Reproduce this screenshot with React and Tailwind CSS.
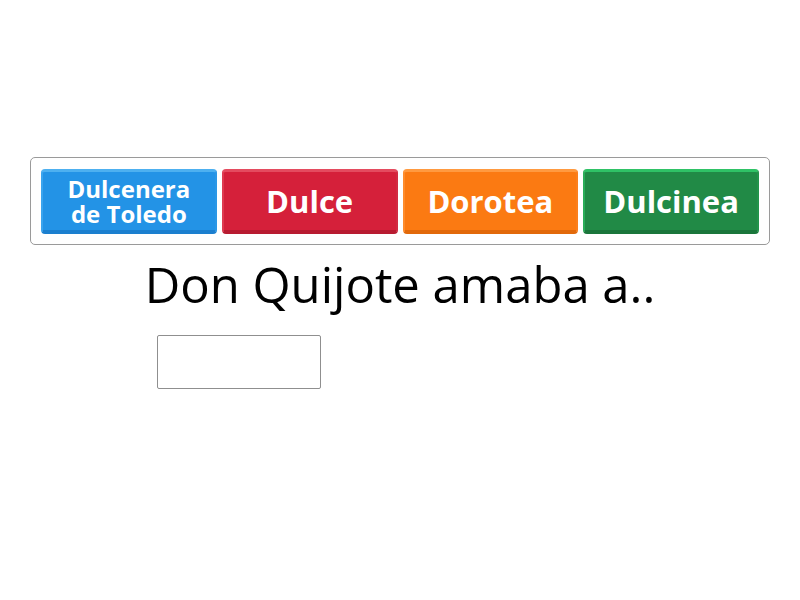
import React from "react";

const options = [
  {
    label: "Dulcenera de Toledo",
    small: true,
    cls: "bg-[#2393e6] border-t-[#4db0f0] border-l-[#3aa4ee] border-r-[#2a97e6] border-b-[#1b7fcf]",
  },
  {
    label: "Dulce",
    cls: "bg-[#d5203a] border-t-[#e44b5f] border-l-[#df3a50] border-r-[#d22a42] border-b-[#b81b31]",
  },
  {
    label: "Dorotea",
    cls: "bg-[#fb7a12] border-t-[#ff9a40] border-l-[#fe8c2c] border-r-[#fb7f1c] border-b-[#e2690a]",
  },
  {
    label: "Dulcinea",
    cls: "bg-[#218a46] border-t-[#2fc266] border-l-[#29ad59] border-r-[#23944b] border-b-[#1a763b]",
  },
];

const App = () => {
  return (
    <div
      className="w-[800px] h-[600px] bg-white pt-[157px]"
      style={{ fontFamily: '"Open Sans", sans-serif' }}
    >
      {/* Answer tiles */}
      <div className="ml-[30px] w-[740px] h-[88px] border border-[#9a9a9a] rounded-[5px] pl-[10px] pr-[10px] pt-[11px]">
        <div className="grid grid-cols-4 gap-[5px]">
          {options.map((o) => (
            <div
              key={o.label}
              className={`h-[65px] rounded-[4px] border-t-[3px] border-x-[2px] border-b-[4px] flex items-center justify-center text-white font-bold text-center ${o.cls}`}
            >
              {o.small ? (
                <span className="text-[24px] leading-[25px] px-[14px]">
                  {o.label}
                </span>
              ) : (
                <span className="text-[31px] leading-none">{o.label}</span>
              )}
            </div>
          ))}
        </div>
      </div>

      {/* Question */}
      <p className="mt-[5px] text-center text-[49px] leading-[68px] text-black">
        Don Quijote amaba a..
      </p>

      {/* Drop box */}
      <div className="ml-[157px] mt-[17px] w-[164px] h-[54px] border border-[#8f8f8f] rounded-[2px]" />
    </div>
  );
};

export default App;
